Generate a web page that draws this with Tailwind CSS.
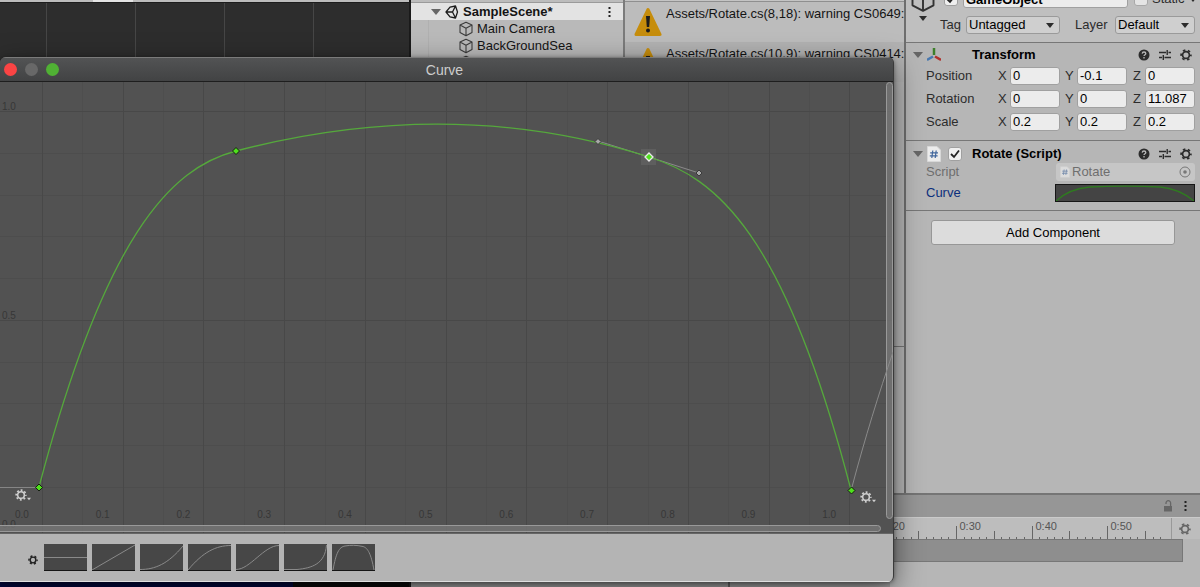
<!DOCTYPE html>
<html lang="en">
<head>
  <meta charset="UTF-8">
  <title>Curve</title>
  <script src="https://cdn.jsdelivr.net/npm/@tailwindcss/browser@4"></script>
</head>
<body class="relative h-screen overflow-hidden bg-[#b6b6b6] font-['Liberation_Sans',Arial,sans-serif] text-[13px] leading-4 text-[#141414]">

  <!-- shared icons -->
  <svg class="hidden">
    <symbol id="gear" viewBox="0 0 14 14">
      <circle cx="7" cy="7" r="3.9" fill="none" stroke="currentColor" stroke-width="1.8" />
      <circle cx="7" cy="7" r="5.6" fill="none" stroke="currentColor" stroke-width="2" stroke-dasharray="2.2 2.2" stroke-dashoffset="1.1" />
    </symbol>
    <symbol id="gear6" viewBox="0 0 14 14">
      <circle cx="7" cy="7" r="4" fill="none" stroke="currentColor" stroke-width="2" />
      <circle cx="7" cy="7" r="5.7" fill="none" stroke="currentColor" stroke-width="2" stroke-dasharray="2.9 3.07" stroke-dashoffset="1.45" />
    </symbol>
    <symbol id="cube" viewBox="0 0 16 16">
      <path d="M8 1.2 14 4v7.6L8 14.8 2 11.6V4zM2 4l6 3.2L14 4M8 7.2v7.6" fill="none" stroke="currentColor" stroke-width="1.1" stroke-linejoin="round" />
    </symbol>
    <symbol id="help" viewBox="0 0 12 12">
      <circle cx="6" cy="6" r="5.5" fill="currentColor" />
      <path d="M4.2 4.6C4.3 3.4 5 3 6 3s1.8.6 1.8 1.5C7.8 5.7 6 5.7 6 7.1M6 8.1v1.3" fill="none" stroke="#b8b8b8" stroke-width="1.3" />
    </symbol>
    <symbol id="preset" viewBox="0 0 12 12">
      <path d="M0 3.5h7M9.5 3.5H12M8.2 1v5M0 8.5h3M5.5 8.5H12M4.3 6v5" fill="none" stroke="currentColor" stroke-width="1.4" />
    </symbol>
    <symbol id="down" viewBox="0 0 10 6"><path d="M0 0h10L5 6z" fill="currentColor" /></symbol>
    <symbol id="warn" viewBox="0 0 28 30">
      <path d="M14 2.5 26 27.5H2z" fill="#c68d0c" stroke="#c68d0c" stroke-width="3" stroke-linejoin="round" />
      <path d="M12 9h4l-.8 11h-2.4z" fill="#1c1c1c" /><circle cx="14" cy="23.5" r="2" fill="#1c1c1c" />
    </symbol>
    <symbol id="script" viewBox="0 0 14 16">
      <path d="M1 .5h9L13.5 4v11.5H.5V.5z" fill="#ececec" stroke="#d8d8d8" />
      <path d="M5.800 4.500 4.800 12M9.200 4.500 8.200 12M3.200 6.800h7.800M2.800 9.800h7.800" stroke="#41669c" stroke-width="1.2" fill="none" />
    </symbol>
  </svg>

  <div class="flex h-full">
    <!-- scene and game views -->
    <section class="flex min-w-0 flex-1 flex-col border-r-2 border-[#1a1a1a] bg-[#0b0b0b]">
      <div class="flex h-[2px] bg-[#bcbcbc] pl-[93px]"><div class="w-10 bg-[#e4e4e4]"></div></div>
      <div class="flex-1 border-t border-[#1c1c1c] bg-[#2d2d2d]">
        <svg class="h-full w-full" fill="none" stroke="#464646">
          <path d="M46.5 0v600M135.500 0v600M224.500 0v600M313.500 0v600" />
        </svg>
      </div>
      <div class="flex h-[6px]"><div class="w-[293px] bg-[#02073f]"></div></div>
    </section>

    <div class="flex w-[789px] shrink-0 flex-col">
      <div class="flex min-h-0 flex-1">
        <!-- hierarchy -->
        <section class="w-[214px] border-r-2 border-[#7b7b7b] bg-[#b9b9b9]">
          <div class="h-[3px] border-b border-[#9a9a9a] bg-[#bcbcbc]"></div>
          <div class="flex h-[17px] items-center bg-[#e3e3e3] pl-5">
            <svg class="h-2 w-[10px] text-[#666]"><use href="#down" /></svg>
            <svg class="ml-1 h-[14px] w-[14px]" viewBox="0 0 14 14" fill="none" stroke="#1c1c1c" stroke-width="1.3" stroke-linejoin="round">
              <path d="M10.500 1 5 2.200 1 7l4 4.800L10.500 13 12.500 7zM1 7h6.500M7.500 7l3-6M7.500 7l3 6" />
            </svg>
            <h2 class="ml-1 flex-1 font-bold">SampleScene*</h2>
            <svg class="mr-3 h-3 w-[3px]" viewBox="0 0 3 12" fill="#222"><path d="M.5 1h2v2h-2zM.5 5h2v2h-2zM.5 9h2v2h-2z" /></svg>
          </div>
          <ul class="ml-[17px] border-l border-[#b0b0b0]">
            <li class="flex h-[17px] items-center gap-[3px] pl-[29px]"><svg class="h-4 w-4 text-[#3c3c3c]"><use href="#cube" /></svg>Main Camera</li>
            <li class="flex h-[17px] items-center gap-[3px] pl-[29px]"><svg class="h-4 w-4 text-[#3c3c3c]"><use href="#cube" /></svg>BackGroundSea</li>
            <li class="flex h-[17px] items-center gap-[3px] pl-[29px]"><svg class="h-4 w-4 text-[#3c3c3c]"><use href="#cube" /></svg></li>
          </ul>
        </section>

        <!-- console -->
        <section class="flex min-w-0 flex-1 flex-col">
          <div class="h-[2px] border-b border-[#8f8f8f] bg-[#c4c4c4]"></div>
          <div class="flex h-10 gap-1 overflow-hidden whitespace-nowrap bg-[#bcbcbc] pt-1 pl-[9px]">
            <svg class="mt-px h-[30px] w-7 shrink-0"><use href="#warn" /></svg>
            <p>Assets/Rotate.cs(8,18): warning CS0649:</p>
          </div>
          <div class="flex h-10 gap-1 overflow-hidden whitespace-nowrap bg-[#b2b2b2] pt-1 pl-[9px]">
            <svg class="mt-px h-[30px] w-7 shrink-0"><use href="#warn" /></svg>
            <p>Assets/Rotate.cs(10,9): warning CS0414:</p>
          </div>
          <div class="flex-1 border-b border-[#777]"></div>
          <div class="h-[146px]"></div>
        </section>

        <!-- inspector -->
        <section class="w-[296px] border-l-2 border-[#6e6e6e] bg-[#b6b6b6] text-[#2c2c2c]">
          <div class="h-[42px] overflow-hidden bg-[#bfbfbf]">
            <div class="-mt-[10px] flex h-[18px] items-center">
              <svg class="ml-[3px] h-7 w-7 shrink-0 text-[#333]"><use href="#cube" /></svg>
              <div class="relative ml-[7px] h-[14px] w-[14px] shrink-0">
                <input type="checkbox" checked aria-label="Active" class="block h-[14px] w-[14px] appearance-none rounded-[3px] border border-[#a0a0a0] bg-[#efefef]">
                <svg class="pointer-events-none absolute inset-0" viewBox="0 0 14 14" fill="none" stroke="#222" stroke-width="1.8"><path d="m3 7 3 3 5-6.5" /></svg>
              </div>
              <input type="text" value="GameObject" aria-label="Name" class="ml-[5px] h-[18px] w-[165px] rounded-[3px] border border-[#a0a0a0] bg-[#ececec] px-[2px] font-bold text-black">
              <input type="checkbox" id="static" class="ml-[6px] h-[14px] w-[14px] appearance-none rounded-[3px] border border-[#a8a8a8] bg-[#e4e4e4]">
              <label for="static" class="ml-1">Static</label>
              <svg class="ml-1 h-[5px] w-2 shrink-0"><use href="#down" /></svg>
            </div>
            <div class="mt-2 flex h-[18px] items-center">
              <svg class="ml-[13px] h-[5px] w-2 shrink-0 self-start"><use href="#down" /></svg>
              <label for="tag" class="ml-[13px] w-[26px]">Tag</label>
              <div class="relative">
                <select id="tag" class="block h-[18px] w-[94px] appearance-none rounded-[3px] border border-[#9a9a9a] bg-[#cfcfcf] pl-[2px] leading-4 text-black"><option>Untagged</option></select>
                <svg class="pointer-events-none absolute top-[7px] right-[6px] h-[5px] w-2"><use href="#down" /></svg>
              </div>
              <label for="layer" class="ml-[15px] w-10">Layer</label>
              <div class="relative">
                <select id="layer" class="block h-[18px] w-[80px] appearance-none rounded-[3px] border border-[#9a9a9a] bg-[#cfcfcf] pl-[2px] leading-4 text-black"><option>Default</option></select>
                <svg class="pointer-events-none absolute top-[7px] right-[6px] h-[5px] w-2"><use href="#down" /></svg>
              </div>
            </div>
          </div>

          <div class="border-t border-[#777] pr-[5px]">
            <div class="flex h-6 items-center">
              <svg class="ml-[7px] h-2 w-[10px] text-[#666]"><use href="#down" /></svg>
              <svg class="ml-1 h-[14px] w-[14px]" viewBox="0 0 14 14" stroke-width="2.5" fill="none">
                <path d="M7 0v7" stroke="#3c7f2a" /><path d="M6 8.5 0 12" stroke="#4878b0" /><path d="m8 8.500 6 3.500" stroke="#b0302c" />
              </svg>
              <h2 class="ml-[31px] flex-1 font-bold text-black">Transform</h2>
              <button aria-label="Help" class="h-3 w-3"><svg class="h-3 w-3"><use href="#help" /></svg></button>
              <button aria-label="Presets" class="ml-[9px] h-3 w-3"><svg class="h-3 w-3"><use href="#preset" /></svg></button>
              <button aria-label="Settings" class="ml-[9px] mr-[3px] h-3 w-3"><svg class="h-3 w-3"><use href="#gear6" /></svg></button>
            </div>
            <div class="grid grid-cols-[72px_12px_50px_17px_50px_18px_50px] gap-y-[5px] pl-5 *:h-[18px] *:leading-[18px]">
              <span>Position</span>
              <label for="px">X</label><input id="px" type="text" value="0" class="rounded-[3px] border border-[#a0a0a0] bg-[#ececec] px-[2px] text-black">
              <label for="py" class="pl-[5px]">Y</label><input id="py" type="text" value="-0.1" class="rounded-[3px] border border-[#a0a0a0] bg-[#ececec] px-[2px] text-black">
              <label for="pz" class="pl-[6px]">Z</label><input id="pz" type="text" value="0" class="rounded-[3px] border border-[#a0a0a0] bg-[#ececec] px-[2px] text-black">
              <span>Rotation</span>
              <label for="rx">X</label><input id="rx" type="text" value="0" class="rounded-[3px] border border-[#a0a0a0] bg-[#ececec] px-[2px] text-black">
              <label for="ry" class="pl-[5px]">Y</label><input id="ry" type="text" value="0" class="rounded-[3px] border border-[#a0a0a0] bg-[#ececec] px-[2px] text-black">
              <label for="rz" class="pl-[6px]">Z</label><input id="rz" type="text" value="11.087" class="rounded-[3px] border border-[#a0a0a0] bg-[#ececec] px-[2px] text-black">
              <span>Scale</span>
              <label for="sx">X</label><input id="sx" type="text" value="0.2" class="rounded-[3px] border border-[#a0a0a0] bg-[#ececec] px-[2px] text-black">
              <label for="sy" class="pl-[5px]">Y</label><input id="sy" type="text" value="0.2" class="rounded-[3px] border border-[#a0a0a0] bg-[#ececec] px-[2px] text-black">
              <label for="sz" class="pl-[6px]">Z</label><input id="sz" type="text" value="0.2" class="rounded-[3px] border border-[#a0a0a0] bg-[#ececec] px-[2px] text-black">
            </div>
          </div>

          <div class="mt-[9px] border-y border-[#777] pr-[5px] pb-2">
            <div class="flex h-[22px] items-center pt-[3px]">
              <svg class="ml-[7px] h-2 w-[10px] text-[#666]"><use href="#down" /></svg>
              <svg class="ml-1 h-4 w-[14px]"><use href="#script" /></svg>
              <div class="relative ml-[7px] h-[14px] w-[14px]">
                <input type="checkbox" checked aria-label="Rotate enabled" class="block h-[14px] w-[14px] appearance-none rounded-[3px] border border-[#a0a0a0] bg-[#efefef]">
                <svg class="pointer-events-none absolute inset-0" viewBox="0 0 14 14" fill="none" stroke="#222" stroke-width="1.8"><path d="m3 7 3 3 5-6.5" /></svg>
              </div>
              <h2 class="ml-[10px] flex-1 font-bold text-black">Rotate (Script)</h2>
              <button aria-label="Help" class="h-3 w-3"><svg class="h-3 w-3"><use href="#help" /></svg></button>
              <button aria-label="Presets" class="ml-[9px] h-3 w-3"><svg class="h-3 w-3"><use href="#preset" /></svg></button>
              <button aria-label="Settings" class="ml-[9px] mr-[3px] h-3 w-3"><svg class="h-3 w-3"><use href="#gear6" /></svg></button>
            </div>
            <div class="flex h-[18px] items-center pl-5 text-[#6e6e6e]">
              <span class="w-[130px]">Script</span>
              <div class="flex h-[18px] flex-1 items-center rounded-[3px] bg-[#c6c6c6] px-1">
                <svg class="h-3 w-[10px] opacity-60"><use href="#script" /></svg>
                <span class="ml-[2px] flex-1">Rotate</span>
                <svg class="h-3 w-3" viewBox="0 0 12 12"><circle cx="6" cy="6" r="5" fill="none" stroke="#777" /><circle cx="6" cy="6" r="1.8" fill="#777" /></svg>
              </div>
            </div>
            <div class="mt-[3px] flex h-[18px] items-center pl-5">
              <span class="w-[129px] text-[#0c2f7c]">Curve</span>
              <button aria-label="Curve" class="h-[18px] flex-1 border border-[#161616] bg-[#444]">
                <svg class="h-full w-full" viewBox="0 0 139 16" preserveAspectRatio="none" fill="none" stroke="#2f7a20" stroke-width="1.3"><path d="M0 16C11 6 22 3 34 2 58 .8 82 .8 105 2 116 3 128 7 139 16" /></svg>
              </button>
            </div>
          </div>
          <button class="mt-[9px] ml-[25px] h-[25px] w-[244px] rounded-[3px] border border-[#979797] bg-[#dcdcdc] text-black">Add Component</button>
        </section>
      </div>

      <!-- timeline -->
      <section class="h-[94px] border-t-2 border-[#757575]">
        <div class="flex h-[22px] items-center justify-end bg-[#969696] pr-[13px]">
          <svg class="h-3 w-[10px]" viewBox="0 0 10 12"><path d="M1 6h8v5.500H1z" fill="#666" /><path d="M3 4V3a2.300 2.300 0 0 1 4.600 0v3" fill="none" stroke="#666" stroke-width="1.3" /></svg>
          <svg class="ml-[11px] h-3 w-[3px]" viewBox="0 0 3 12" fill="#222"><path d="M.5 1h2v2h-2zM.5 5h2v2h-2zM.5 9h2v2h-2z" /></svg>
        </div>
        <div class="flex h-[22px] border-t border-[#cacaca] bg-[#bdbdbd]">
          <svg id="ruler" class="h-full min-w-0 flex-1" stroke="#666"></svg>
          <button aria-label="Timeline settings" class="flex w-[29px] items-center justify-center border-l border-[#999] pr-[3px] text-[#666]"><svg class="h-3 w-3"><use href="#gear6" /></svg></button>
        </div>
        <div class="mr-[17px] h-[23px] border border-[#777] bg-[#8e8e8e]"></div>
        <div class="flex h-[25px]">
          <div class="w-[319px] border-r-2 border-[#666] bg-[#a0a0a0]"></div>
          <div class="w-[160px] bg-[#a0a0a0]"></div>
        </div>
      </section>
    </div>
  </div>

  <!-- curve editor window -->
  <div class="absolute top-[57px] right-[306px] bottom-[5px] left-0 flex flex-col overflow-hidden rounded-t-md rounded-br-md border-r border-[#3a3a3a] bg-[#525252] shadow-[0_8px_28px_rgba(0,0,0,0.5),0_1px_4px_rgba(0,0,0,0.4)]">
    <div class="relative flex h-[25px] shrink-0 items-center justify-center border-t border-b border-t-[#7a7a7a] border-b-[#1e1e1e] bg-linear-to-b from-[#525354] to-[#424344] pr-1">
      <div class="absolute left-1 flex gap-2">
        <button aria-label="Close" class="h-[13px] w-[13px] rounded-full bg-[#fb4444]"></button>
        <button aria-label="Minimise" class="h-[13px] w-[13px] rounded-full bg-[#686868]"></button>
        <button aria-label="Zoom" class="h-[13px] w-[13px] rounded-full bg-[#50b134]"></button>
      </div>
      <h1 class="text-sm text-[#cdcdcd]">Curve</h1>
    </div>

    <div class="relative min-h-0 flex-1">
      <svg class="absolute h-full w-full" viewBox="0 82 893 451" preserveAspectRatio="none" fill="none">
        <g id="grid" stroke="#484848"></g>
        <path d="M0 487.5H39" stroke="#858585" />
        <rect x="641" y="149" width="15" height="16" fill="#5e5e5e" />
        <path d="M598 141 649 157 699 173" stroke="#8a8a8a" />
        <path d="M39 487C105 237 170 168 236 151 374 115 511 113 649 157 716 178 784 232 851 490" stroke="#55a83c" stroke-width="1.3" />
        <g fill="#4fe01c" stroke="#142010">
          <path d="m39 484 3.5 3.5L39 491l-3.500-3.500z" />
          <path d="m236 147.500 3.500 3.500-3.500 3.500-3.500-3.500z" />
          <path d="m851.500 487 3.500 3.500-3.500 3.500-3.500-3.500z" />
          <path d="m649 153 4 4-4 4-4-4z" stroke="#e8e8e8" stroke-width="1.3" />
        </g>
        <g fill="#a8a8a8" stroke="#3a3a3a">
          <path d="m598 138.500 3 3-3 3-3-3z" /><path d="m699 170 3 3-3 3-3-3z" />
        </g>
      </svg>

      <div class="absolute top-[17px] bottom-0 left-[2px] flex flex-col justify-between text-[10px] text-[#373737]">
        <span>1.0</span><span>0.5</span><span>0.0</span>
      </div>
      <div class="absolute right-[-10px] bottom-[10px] left-[15px] grid grid-cols-11 text-[10px] text-[#373737]">
        <span>0.0</span><span>0.1</span><span>0.2</span><span>0.3</span><span>0.4</span><span>0.5</span><span>0.6</span><span>0.7</span><span>0.8</span><span>0.9</span><span>1.0</span>
      </div>

      <button aria-label="Wrap before first key" class="absolute bottom-8 left-[15px] flex items-end text-[#cfcfcf]"><svg class="h-3 w-3"><use href="#gear" /></svg><svg class="h-1 w-1"><use href="#down" /></svg></button>
      <button aria-label="Wrap after last key" class="absolute right-[17px] bottom-[30px] flex items-end text-[#cfcfcf]"><svg class="h-3 w-3"><use href="#gear" /></svg><svg class="h-1 w-1"><use href="#down" /></svg></button>

      <div class="absolute top-0 right-0 bottom-[14px] w-[7px] rounded-full border border-[#999] bg-[#777]/80"></div>
      <div class="absolute right-[12px] bottom-[1px] -left-2 h-[7px] rounded-full border border-[#999] bg-[#777]/80"></div>

      <!-- looped part of the curve runs over the scroll bar -->
      <svg class="pointer-events-none absolute h-full w-full" viewBox="0 82 893 451" preserveAspectRatio="none" fill="none" stroke="#8a8a8a">
        <path d="M852 487C865 438 879 393 893 352" />
      </svg>
    </div>

    <div class="flex h-[49px] shrink-0 items-center border-t border-b border-t-[#666] border-b-[#e0e0e0] bg-[#b4b4b4] pl-7">
      <button aria-label="Preset menu" class="mt-1 mr-[6px] h-[10px] w-[10px] text-[#222]"><svg class="h-[10px] w-[10px]"><use href="#gear6" /></svg></button>
      <div class="flex gap-[5px]">
        <button aria-label="Constant" class="h-[27px] w-[43px] border-b border-[#151515] bg-[#474747]"><svg class="h-full w-full" viewBox="0 0 43 26" fill="none" stroke="#8a8a8a"><path d="M0 13.500h43" /></svg></button>
        <button aria-label="Linear" class="h-[27px] w-[43px] border-b border-[#151515] bg-[#474747]"><svg class="h-full w-full" viewBox="0 0 43 26" fill="none" stroke="#8a8a8a"><path d="M0 26 43 1" /></svg></button>
        <button aria-label="Ease in" class="h-[27px] w-[43px] border-b border-[#151515] bg-[#474747]"><svg class="h-full w-full" viewBox="0 0 43 26" fill="none" stroke="#8a8a8a"><path d="M0 25.500C15 25.500 28 20 43 2" /></svg></button>
        <button aria-label="Ease out" class="h-[27px] w-[43px] border-b border-[#151515] bg-[#474747]"><svg class="h-full w-full" viewBox="0 0 43 26" fill="none" stroke="#8a8a8a"><path d="M0 26C15 8 28 1.500 43 1.500" /></svg></button>
        <button aria-label="Ease in and out" class="h-[27px] w-[43px] border-b border-[#151515] bg-[#474747]"><svg class="h-full w-full" viewBox="0 0 43 26" fill="none" stroke="#8a8a8a"><path d="M0 25.500C14 25.500 28 1.500 43 1.500" /></svg></button>
        <button aria-label="Steep ease in" class="h-[27px] w-[43px] border-b border-[#151515] bg-[#474747]"><svg class="h-full w-full" viewBox="0 0 43 26" fill="none" stroke="#8a8a8a"><path d="M0 25.500H13C28 24 41 20 42.500 1" /></svg></button>
        <button aria-label="Arch" class="h-[27px] w-[43px] border-b border-[#151515] bg-[#474747]"><svg class="h-full w-full" viewBox="0 0 43 26" fill="none" stroke="#8a8a8a"><path d="M1 26C4 9 7 3 13 2 19 1 24 1 31 2.500 36 4 39 10 42 26" /></svg></button>
      </div>
    </div>
  </div>

  <script>
    const NS = 'http://www.w3.org/2000/svg';
    const add = (parent, tag, attrs, text) => {
      const el = document.createElementNS(NS, tag);
      for (const k in attrs) el.setAttribute(k, attrs[k]);
      if (text) el.textContent = text;
      parent.appendChild(el);
    };

    // curve grid, darker line on every full step
    const grid = document.getElementById('grid');
    for (let i = 0; i <= 20; i++) {
      const x = Math.round(42 + i * 40.37) + 0.5;
      add(grid, 'path', { d: `M${x} 82V533`, opacity: i % 2 ? 0.4 : 1 });
    }
    for (let i = 0; i <= 9; i++) {
      const y = Math.round(111 + i * 41.75) + 0.5;
      add(grid, 'path', { d: `M0 ${y}H893`, opacity: i % 5 ? 0.5 : 1 });
    }

    // timeline ruler, ten seconds per major tick
    const ruler = document.getElementById('ruler');
    for (let i = -60; i < 28; i++) {
      const x = Math.round(545 + i * 7.56) + 0.5;
      const h = i % 10 === 0 ? 13 : i % 5 === 0 ? 8 : 2;
      add(ruler, 'path', { d: `M${x} ${21 - h}V21` });
      if (i % 10 === 0 && i >= -20) {
        add(ruler, 'text', { x: x + 3, y: 12, fill: '#555', stroke: 'none', 'font-size': 11 }, '0:' + (30 + i));
      }
    }
  </script>
</body>
</html>
